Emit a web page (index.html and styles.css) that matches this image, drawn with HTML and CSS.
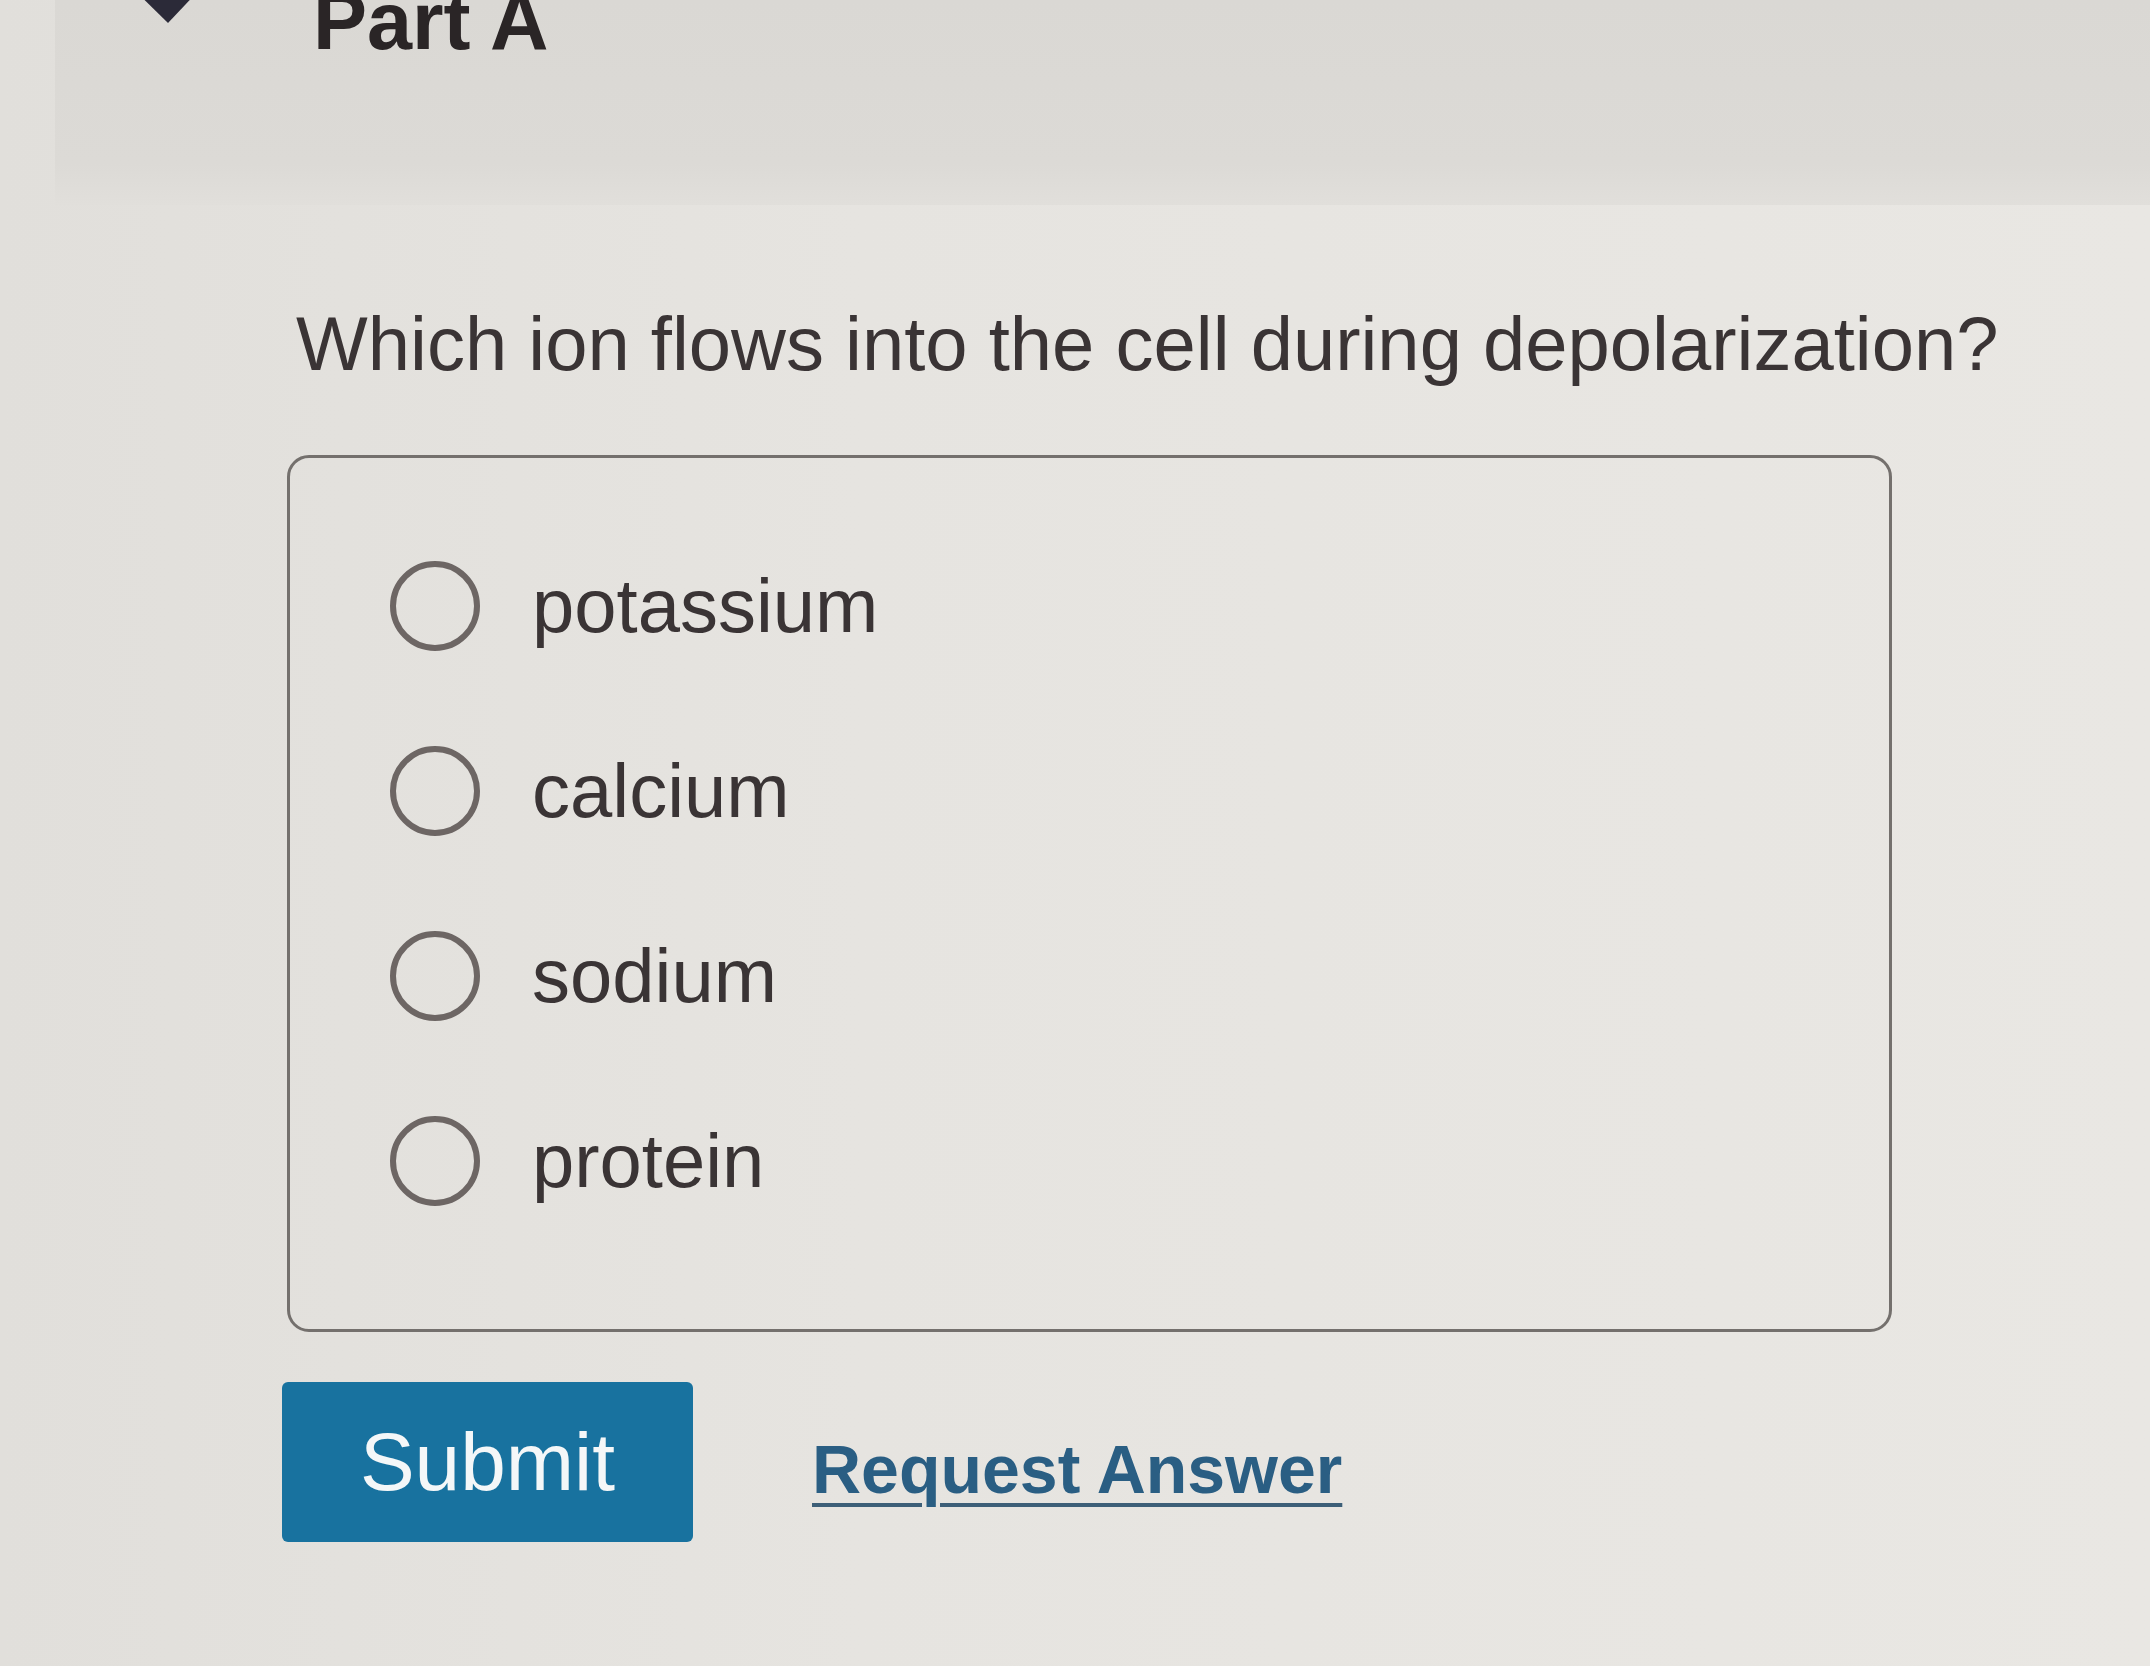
FILE: index.html
```html
<!DOCTYPE html>
<html lang="en">
<head>
<meta charset="utf-8">
<title>Part A</title>
<link rel="stylesheet" href="styles.css">
</head>
<body>
<div class="page">
  <header class="part-header">
    <svg class="caret" width="106" height="54" viewBox="0 0 106 54" aria-hidden="true">
      <polygon points="0,0 106,0 55,54" fill="#2b2a38"/>
    </svg>
    <h2 class="part-title">Part A</h2>
  </header>

  <main class="content">
    <p class="question">Which ion flows into the cell during depolarization?</p>

    <div class="choices">
      <label class="choice"><span class="radio"></span><span class="choice-text">potassium</span></label>
      <label class="choice"><span class="radio"></span><span class="choice-text">calcium</span></label>
      <label class="choice"><span class="radio"></span><span class="choice-text">sodium</span></label>
      <label class="choice"><span class="radio"></span><span class="choice-text">protein</span></label>
    </div>

    <div class="actions">
      <button class="submit" type="button">Submit</button>
      <a class="request" href="#">Request Answer</a>
    </div>
  </main>
</div>
</body>
</html>
```

FILE: styles.css
```css
html, body {
  margin: 0;
  padding: 0;
}

body {
  width: 2150px;
  height: 1666px;
  overflow: hidden;
  background: linear-gradient(to right, #e1dfdb 0%, #e6e4e0 40%, #e9e7e3 100%);
  font-family: "Liberation Sans", Arial, Helvetica, sans-serif;
  color: #373232;
}

.page {
  display: flex;
  flex-direction: column;
}

.part-header {
  display: flex;
  align-items: flex-start;
  height: 205px;
  margin-left: 55px;
  padding-left: 58px;
  background: linear-gradient(to bottom, #dad8d4 0%, #dcdad6 80%, #e1dfdb 100%);
}

.caret {
  display: block;
  margin-top: -31px;
  flex: none;
}

.part-title {
  margin: -19px 0 0 94px;
  font-size: 81px;
  line-height: 1;
  font-weight: 700;
  color: #2a2526;
}

.content {
  display: flex;
  flex-direction: column;
  align-items: flex-start;
  padding-left: 285px;
}

.question {
  margin: 95px 0 0 11px;
  font-size: 76px;
  line-height: 1.15;
  color: #3a3435;
}

.choices {
  box-sizing: border-box;
  width: 1605px;
  height: 877px;
  margin-top: 68px;
  margin-left: 2px;
  padding: 55px 0 0 100px;
  border: 3px solid #74706d;
  border-radius: 22px;
  display: flex;
  flex-direction: column;
}

.choice {
  display: flex;
  align-items: center;
  height: 185px;
  gap: 52px;
}

.radio {
  box-sizing: border-box;
  width: 90px;
  height: 90px;
  border: 6px solid #6d6664;
  border-radius: 50%;
  flex: none;
}

.choice-text {
  font-size: 76px;
  line-height: 1.15;
  color: #3a3435;
}

.actions {
  display: flex;
  align-items: center;
  margin-top: 50px;
  margin-left: -3px;
  gap: 119px;
}

.submit {
  width: 411px;
  height: 160px;
  border: none;
  border-radius: 6px;
  background: #18729f;
  color: #f4f7f8;
  font-family: "Liberation Sans", Arial, Helvetica, sans-serif;
  font-size: 82px;
  line-height: 1;
  padding: 0;
}

.request {
  margin-top: 14px;
  font-size: 68px;
  font-weight: 700;
  color: #2a5e83;
  text-decoration: underline;
  text-decoration-thickness: 4px;
  text-underline-offset: 10px;
  text-decoration-color: #3d5f78;
}
```
